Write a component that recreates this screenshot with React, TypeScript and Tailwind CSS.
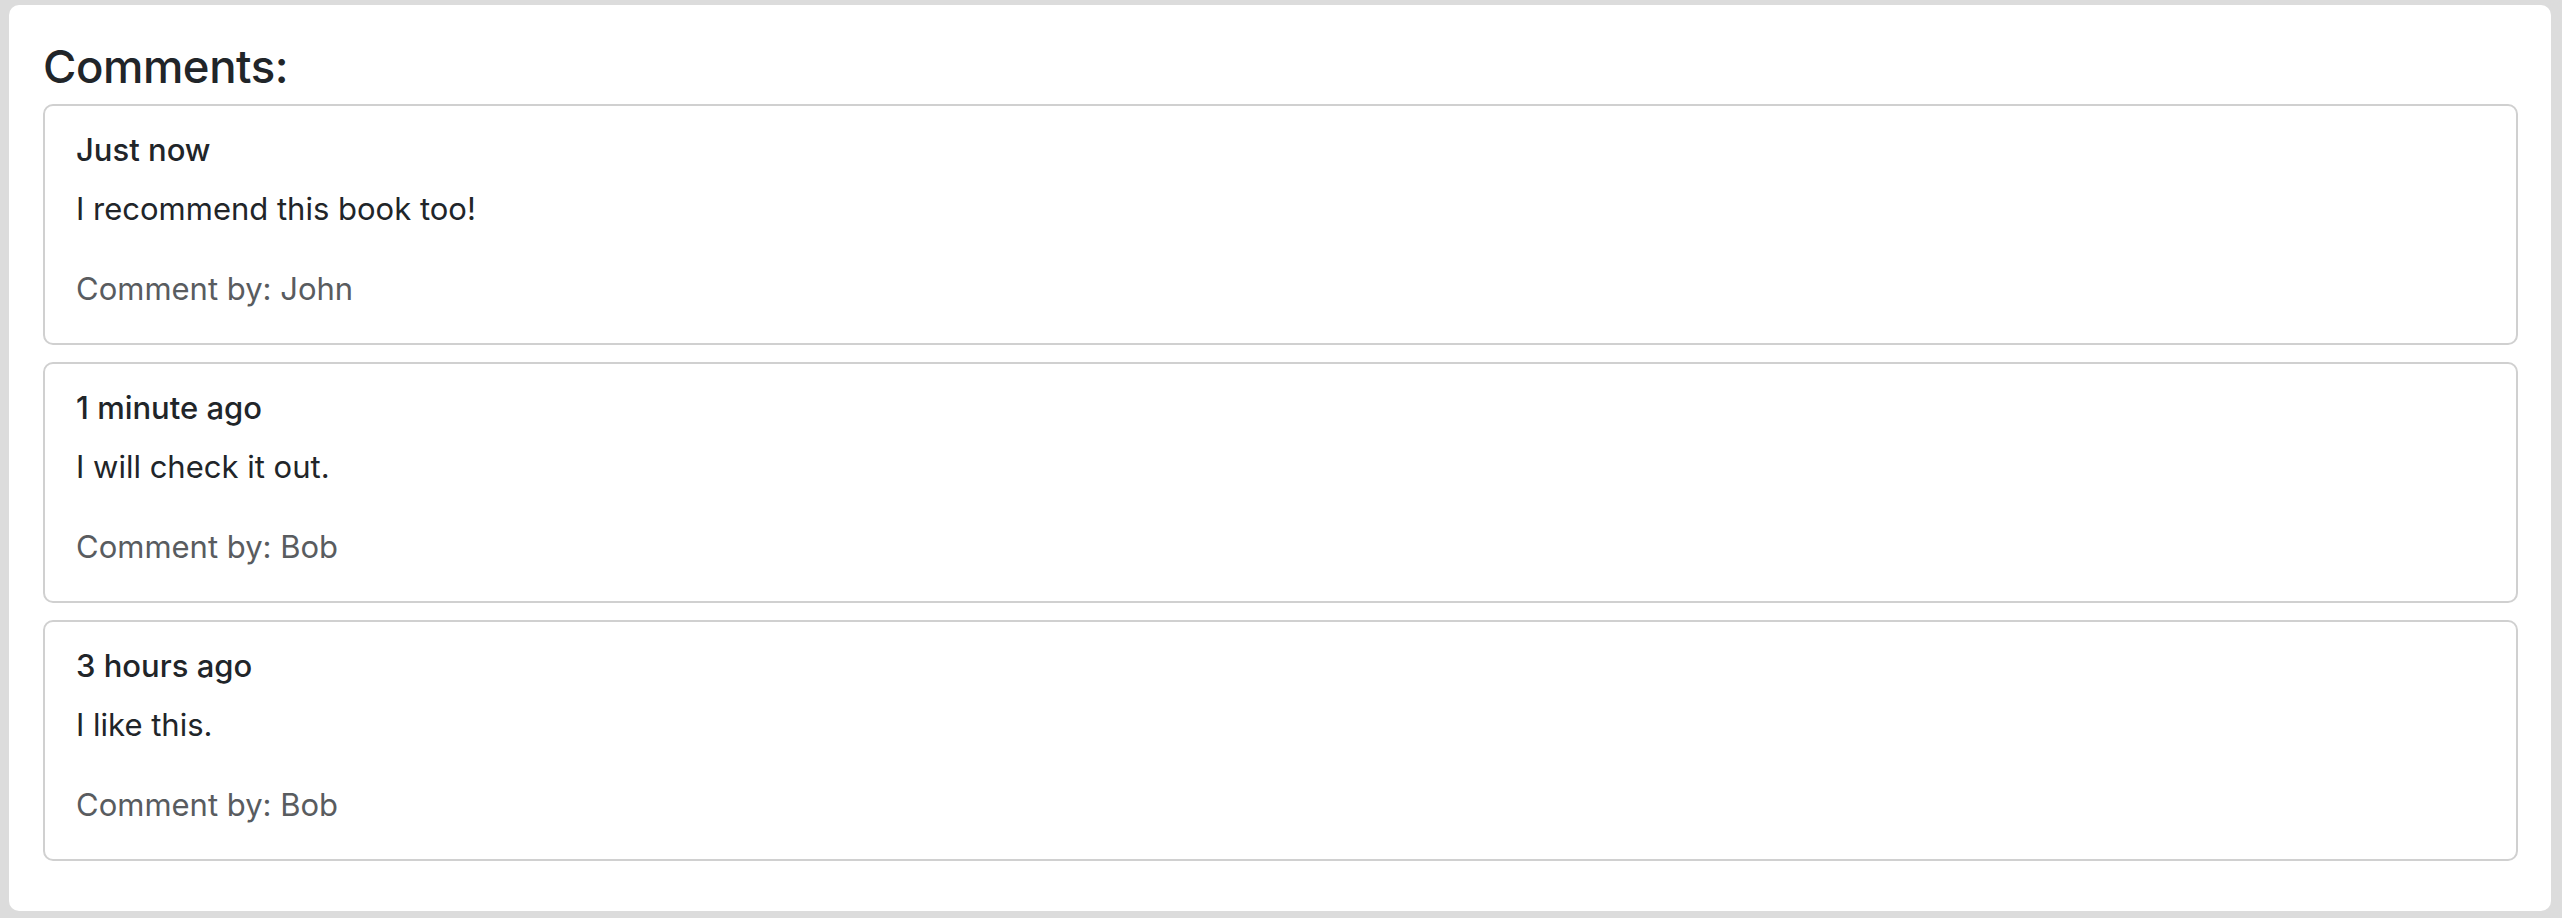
const comments = [
  { time: "Just now", text: "I recommend this book too!", author: "John" },
  { time: "1 minute ago", text: "I will check it out.", author: "Bob" },
  { time: "3 hours ago", text: "I like this.", author: "Bob" },
];

export default function App() {
  return (
    <div
      className="h-[918px] w-full bg-[#dcdcdc] pt-[5px] pr-[11px] pb-[7px] pl-[9px]"
      style={{ fontFamily: "Inter, 'Noto Sans', sans-serif" }}
    >
      <div className="h-full rounded-[10px] bg-white pt-[35px] pr-[33px] pl-[34px]">
        <h3 className="text-[45.5px] leading-[54px] font-medium tracking-[-0.01em] text-[#212529]">
          Comments:
        </h3>
        <div className="mt-[10px] flex flex-col gap-[17px]">
          {comments.map((c) => (
            <div
              key={c.time}
              className="rounded-[10px] border-2 border-[#d0d0d0] pt-[27px] pb-[37px] pl-[31px] text-[31px] leading-[34px]"
            >
              <h5 className="font-medium text-[#212529]">{c.time}</h5>
              <p className="mt-[25px] text-[#212529]">{c.text}</p>
              <p className="mt-[46px] text-[#595c5f]">Comment by: {c.author}</p>
            </div>
          ))}
        </div>
      </div>
    </div>
  );
}
